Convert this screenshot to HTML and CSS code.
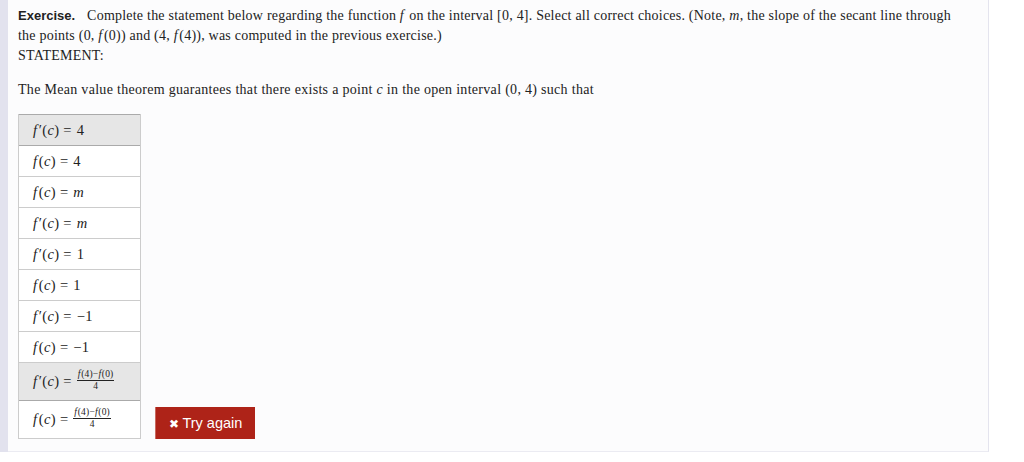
FILE: index.html
```html
<!DOCTYPE html>
<html>
<head>
<meta charset="utf-8">
<link rel="stylesheet" href="styles.css">
</head>
<body>
<div class="page">
  <div class="strip"></div>
  <div class="panel">
    <p class="intro"><span class="label">Exercise.</span><span class="gap"></span>Complete the statement below regarding the function <i class="fi">f</i> on the interval [0, 4]. Select all correct choices. (Note, <i>m</i>, the slope of the secant line through<br>the points (0, <i class="fi">f</i>(0)) and (4, <i class="fi">f</i>(4)), was computed in the previous exercise.)<br>STATEMENT:</p>
    <p class="stmt">The Mean value theorem guarantees that there exists a point <i>c</i> in the open interval (0, 4) such that</p>
    <div class="answer">
      <div class="choices">
        <div class="choice sel"><span><i class="fi">f</i>′(<i>c</i>)<span class="eq">=</span>4</span></div>
        <div class="choice"><span><i class="fi">f</i>(<i>c</i>)<span class="eq">=</span>4</span></div>
        <div class="choice"><span><i class="fi">f</i>(<i>c</i>)<span class="eq">=</span><i>m</i></span></div>
        <div class="choice"><span><i class="fi">f</i>′(<i>c</i>)<span class="eq">=</span><i>m</i></span></div>
        <div class="choice"><span><i class="fi">f</i>′(<i>c</i>)<span class="eq">=</span>1</span></div>
        <div class="choice"><span><i class="fi">f</i>(<i>c</i>)<span class="eq">=</span>1</span></div>
        <div class="choice"><span><i class="fi">f</i>′(<i>c</i>)<span class="eq">=</span>−1</span></div>
        <div class="choice"><span><i class="fi">f</i>(<i>c</i>)<span class="eq">=</span>−1</span></div>
        <div class="choice sel tall"><span><i class="fi">f</i>′(<i>c</i>)<span class="eq">=</span></span><span class="frac"><span class="num"><i class="fi">f</i>(4)−<i class="fi">f</i>(0)</span><span class="den">4</span></span></div>
        <div class="choice tall"><span><i class="fi">f</i>(<i>c</i>)<span class="eq">=</span></span><span class="frac"><span class="num"><i class="fi">f</i>(4)−<i class="fi">f</i>(0)</span><span class="den">4</span></span></div>
      </div>
      <button class="retry"><span class="x">✖</span> Try again</button>
    </div>
  </div>
</div>
</body>
</html>
```

FILE: styles.css
```css
html, body {
  margin: 0;
  padding: 0;
  background: #ffffff;
}
.page {
  display: flex;
  align-items: flex-start;
}
.strip {
  width: 8px;
  align-self: stretch;
  background: #e2e2ee;
}
.panel {
  width: 970px;
  padding: 6px 0 12px 10px;
  background: #fcfcfd;
  border-right: 1px solid #e4e4ee;
  border-bottom: 1px solid #ebebf2;
  font-family: "Liberation Serif", "DejaVu Serif", serif;
  font-size: 14px;
  letter-spacing: 0.3px;
  color: #222;
}
.intro, .stmt {
  margin: 0;
  line-height: 20px;
}
.intro {
  letter-spacing: 0.22px;
  white-space: nowrap;
}
.label {
  font-family: "Liberation Sans", Arial, sans-serif;
  font-weight: bold;
  font-size: 13px;
  letter-spacing: 0;
}
.gap {
  display: inline-block;
  width: 12px;
}
.fi {
  margin-right: 1.5px;
}
.stmt {
  margin-top: 14px;
}
.answer {
  display: flex;
  align-items: flex-end;
  gap: 14px;
  margin-top: 14px;
}
.choices {
  width: 121px;
  border: 1px solid #cccccc;
  border-bottom: none;
  display: flex;
  flex-direction: column;
}
.choice {
  height: 30px;
  border-bottom: 1px solid #cccccc;
  background: #ffffff;
  padding-left: 14px;
  display: flex;
  align-items: center;
  font-size: 14.5px;
  white-space: nowrap;
}
.choice.sel {
  background: #e6e6e6;
  border-bottom-color: #aaaaaa;
}
.choice:first-child.sel {
  border-top: 1px solid #aaaaaa;
  margin-top: -1px;
}
.choice.tall {
  height: 37px;
}
.eq {
  margin: 0 5px 0 4px;
}
.frac {
  display: inline-flex;
  flex-direction: column;
  align-items: center;
  font-size: 9.5px;
  line-height: 10px;
  letter-spacing: 0.2px;
  margin-top: -4px;
}
.frac .fi {
  margin-right: 0.5px;
}
.num {
  border-bottom: 1px solid #222;
  padding: 0 1px 1px;
}
.retry {
  width: 100px;
  height: 32px;
  background: #ae2318;
  border: none;
  border-left: 1px solid #c86a60;
  color: #ffffff;
  font-family: "Liberation Sans", Arial, sans-serif;
  font-size: 14.5px;
  letter-spacing: 0;
  padding: 0;
}
.x {
  font-size: 12px;
}
```
